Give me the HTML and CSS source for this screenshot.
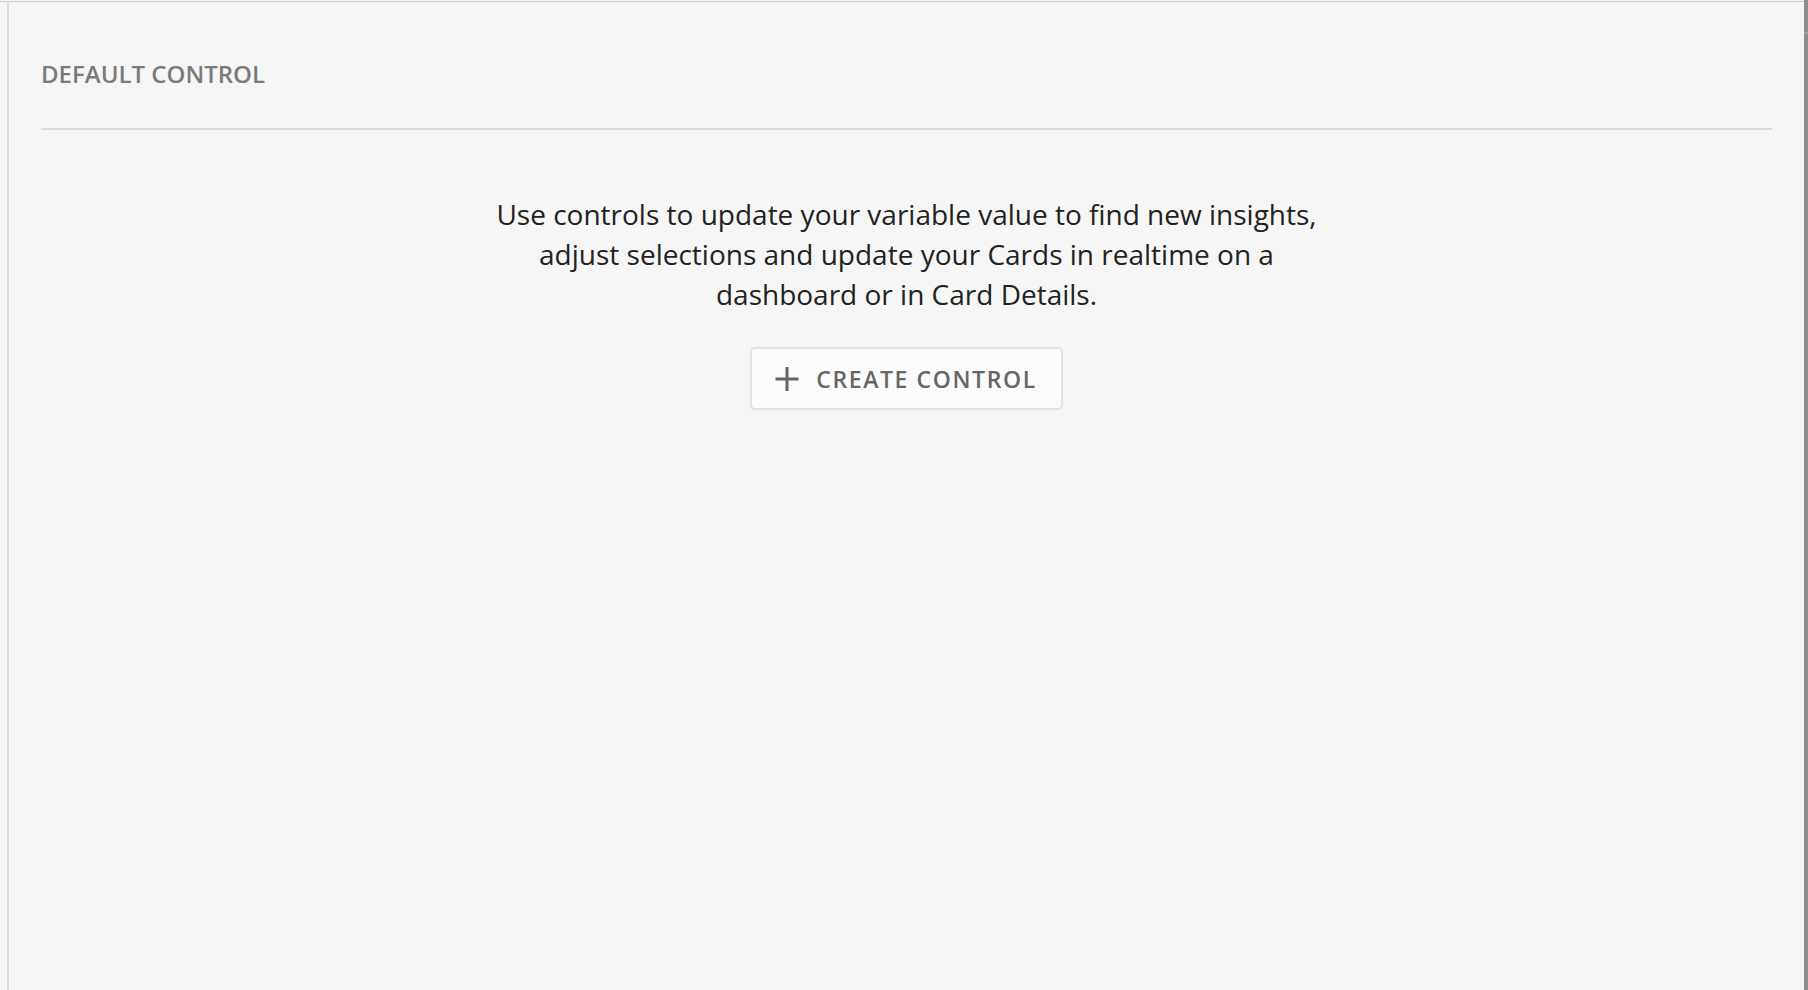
FILE: index.html
```html
<!DOCTYPE html>
<html lang="en">
<head>
<meta charset="utf-8">
<title>Default Control</title>
<link rel="stylesheet" href="styles.css">
</head>
<body>
  <div class="main">
    <div class="frame">
      <div class="panel">
        <header class="section-header">
          <h2 class="section-title">DEFAULT CONTROL</h2>
        </header>
        <div class="empty-state">
          <p class="empty-text">Use controls to update your variable value to find new insights, adjust selections and update your Cards in realtime on a dashboard or in Card Details.</p>
          <button class="create-btn" type="button">
            <svg class="plus-icon" viewBox="0 0 24 24" width="24" height="25" aria-hidden="true">
              <path d="M12 0.5V24.5M0.5 12.5H23.5" stroke="#646464" stroke-width="3" fill="none"/>
            </svg>
            <span class="create-label">CREATE CONTROL</span>
          </button>
        </div>
      </div>
    </div>
  </div>
  <div class="scrollbar"><div class="scrollbar-mark"></div></div>
</body>
</html>
```

FILE: styles.css
```css
html, body {
  margin: 0;
  padding: 0;
}

body {
  width: 1808px;
  height: 990px;
  overflow: hidden;
  background: #f6f6f6;
  display: flex;
  font-family: "Open Sans", "Noto Sans", sans-serif;
}

.main {
  flex: 1;
  display: flex;
  flex-direction: column;
  padding-top: 1px;
}

.frame {
  flex: 1;
  display: flex;
  flex-direction: column;
  border-top: 1px solid #cdcdcd;
}

.panel {
  flex: 1;
  margin-left: 7px;
  border-left: 2px solid #dadada;
  padding: 0 32px;
}

.section-header {
  padding-top: 56px;
  padding-bottom: 38px;
  border-bottom: 2px solid #dcdcdc;
}

.section-title {
  margin: 0;
  font-size: 24px;
  line-height: 32px;
  font-weight: 600;
  color: #7a7a7a;
  letter-spacing: 0;
}

.empty-state {
  display: flex;
  flex-direction: column;
  align-items: center;
  padding-top: 64px;
}

.empty-text {
  margin: 0;
  max-width: 845px;
  text-align: center;
  font-size: 28px;
  line-height: 40px;
  color: #222222;
}

.create-btn {
  margin-top: 33px;
  height: 63px;
  display: inline-flex;
  align-items: center;
  gap: 17px;
  padding: 0 24px 0 23px;
  background: #fbfbfb;
  border: 2px solid #e2e2e2;
  border-radius: 5px;
  font-family: "Open Sans", "Noto Sans", sans-serif;
  cursor: pointer;
}

.plus-icon {
  display: block;
  flex: none;
}

.create-label {
  font-size: 23px;
  font-weight: 600;
  letter-spacing: 1.6px;
  color: #666666;
  line-height: 32px;
}

.scrollbar {
  width: 4px;
  flex: none;
  background: #8f8f8f;
}

.scrollbar-mark {
  margin-top: 32px;
  height: 2px;
  background: #a3a3a3;
}
```
